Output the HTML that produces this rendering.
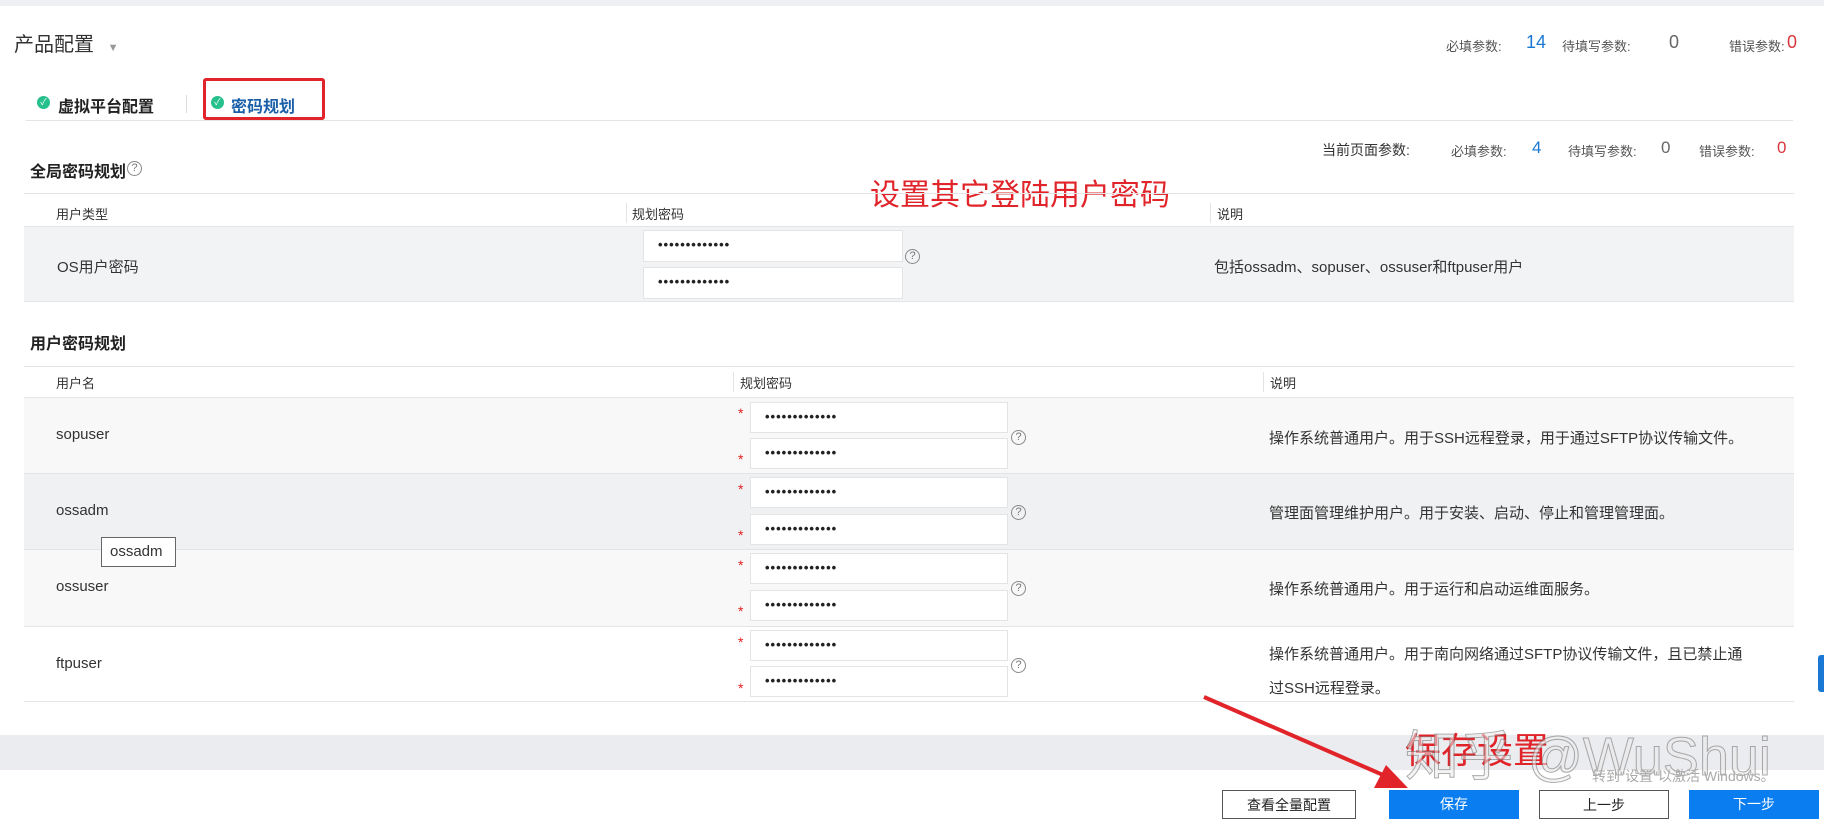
<!DOCTYPE html>
<html><head><meta charset="utf-8"><style>
*{margin:0;padding:0;box-sizing:border-box}
body{width:1824px;height:819px;position:relative;background:#fff;font-family:"Liberation Sans","Noto Sans CJK SC",sans-serif;color:#333;overflow:hidden}
.a{position:absolute;white-space:nowrap}
.inp{position:absolute;background:#fff;border:1px solid #e3e4e6;font-size:13px;letter-spacing:1px;padding-left:14px;line-height:28px;color:#222;font-weight:bold}
.q{position:absolute;width:15px;height:15px;border:1px solid #888;border-radius:50%;font-size:11px;line-height:13px;text-align:center;color:#777}
.st{color:#e02020;position:absolute;font-size:14px}
.btn{position:absolute;top:790px;height:29px;width:130px;text-align:center;line-height:29px;font-size:14px}
.line{position:absolute;height:1px;background:#e3e4e6}
</style></head><body>
<div class="a" style="left:0;top:0;width:1824px;height:6px;background:#eef0f3"></div>
<div class="a" style="left:14px;top:28px;font-size:20px;color:#333">产品配置 <span style="font-size:11px;color:#999;margin-left:8px">▼</span></div>
<div class="a" style="left:1446px;top:36px;font-size:13px;color:#555">必填参数:</div>
<div class="a" style="left:1526px;top:32px;font-size:18px;color:#1a78d4">14</div>
<div class="a" style="left:1562px;top:36px;font-size:13px;color:#555">待填写参数:</div>
<div class="a" style="left:1669px;top:32px;font-size:18px;color:#666">0</div>
<div class="a" style="left:1729px;top:36px;font-size:13px;color:#555">错误参数:</div>
<div class="a" style="left:1787px;top:32px;font-size:18px;color:#d9363e">0</div>

<div class="a" style="left:37px;top:96px;width:13px;height:13px;border-radius:50%;background:#26c08c;color:#fff;font-size:9px;line-height:13px;text-align:center">✓</div>
<div class="a" style="left:58px;top:93px;font-size:16px;font-weight:bold;color:#222">虚拟平台配置</div>
<div class="a" style="left:186px;top:95px;width:1px;height:18px;background:#ddd"></div>
<div class="a" style="left:211px;top:96px;width:13px;height:13px;border-radius:50%;background:#26c08c;color:#fff;font-size:9px;line-height:13px;text-align:center">✓</div>
<div class="a" style="left:231px;top:93px;font-size:16px;font-weight:bold;color:#1a5fa8">密码规划</div>
<div class="a" style="left:203px;top:78px;width:122px;height:42px;border:3px solid #e0242a;border-radius:3px"></div>
<div class="line" style="left:26px;top:120px;width:1767px"></div>

<div class="a" style="left:1322px;top:140px;font-size:14px;color:#333">当前页面参数:</div>
<div class="a" style="left:1451px;top:141px;font-size:13px;color:#555">必填参数:</div>
<div class="a" style="left:1532px;top:138px;font-size:17px;color:#1a78d4">4</div>
<div class="a" style="left:1568px;top:141px;font-size:13px;color:#555">待填写参数:</div>
<div class="a" style="left:1661px;top:138px;font-size:17px;color:#666">0</div>
<div class="a" style="left:1699px;top:141px;font-size:13px;color:#555">错误参数:</div>
<div class="a" style="left:1777px;top:138px;font-size:17px;color:#d9363e">0</div>

<div class="a" style="left:30px;top:158px;font-size:16px;font-weight:bold;color:#222">全局密码规划</div>
<div class="q" style="left:127px;top:161px">?</div>
<div class="a" style="left:870px;top:170px;font-size:30px;color:#e0242a">设置其它登陆用户密码</div>

<div class="line" style="left:24px;top:193px;width:1770px"></div>
<div class="a" style="left:56px;top:204px;font-size:13px">用户类型</div>
<div class="a" style="left:626px;top:203px;width:1px;height:20px;background:#e3e4e6"></div>
<div class="a" style="left:632px;top:204px;font-size:13px">规划密码</div>
<div class="a" style="left:1210px;top:203px;width:1px;height:20px;background:#e3e4e6"></div>
<div class="a" style="left:1217px;top:204px;font-size:13px">说明</div>
<div class="a" style="left:24px;top:226px;width:1770px;height:76px;background:#f2f3f5;border-top:1px solid #e3e4e6;border-bottom:1px solid #e3e4e6"></div>
<div class="a" style="left:57px;top:256px;font-size:15px">OS用户密码</div>
<div class="inp" style="left:643px;top:230px;width:260px;height:32px">•••••••••••••</div>
<div class="inp" style="left:643px;top:267px;width:260px;height:32px">•••••••••••••</div>
<div class="q" style="left:905px;top:249px">?</div>
<div class="a" style="left:1214px;top:256px;font-size:15px">包括ossadm、sopuser、ossuser和ftpuser用户</div>

<div class="a" style="left:30px;top:330px;font-size:16px;font-weight:bold;color:#222">用户密码规划</div>
<div class="line" style="left:24px;top:366px;width:1770px"></div>
<div class="a" style="left:56px;top:373px;font-size:13px">用户名</div>
<div class="a" style="left:733px;top:372px;width:1px;height:20px;background:#e3e4e6"></div>
<div class="a" style="left:740px;top:373px;font-size:13px">规划密码</div>
<div class="a" style="left:1263px;top:372px;width:1px;height:20px;background:#e3e4e6"></div>
<div class="a" style="left:1270px;top:373px;font-size:13px">说明</div>

<div class="a" style="left:24px;top:397px;width:1770px;height:76px;background:#f8f8f9;border-top:1px solid #e3e4e6"></div>
<div class="a" style="left:24px;top:473px;width:1770px;height:76px;background:#f0f1f3;border-top:1px solid #e3e4e6"></div>
<div class="a" style="left:24px;top:549px;width:1770px;height:77px;background:#f8f8f9;border-top:1px solid #e3e4e6"></div>
<div class="a" style="left:24px;top:626px;width:1770px;height:76px;background:#fff;border-top:1px solid #e3e4e6;border-bottom:1px solid #e3e4e6"></div>

<div class="a" style="left:56px;top:426px;font-size:15px">sopuser</div>
<div class="a" style="left:56px;top:502px;font-size:15px">ossadm</div>
<div class="a" style="left:56px;top:578px;font-size:15px">ossuser</div>
<div class="a" style="left:56px;top:655px;font-size:15px">ftpuser</div>
<div class="a" style="left:101px;top:537px;width:75px;height:30px;border:1px solid #666;background:#fff;font-size:15px;line-height:28px;padding-left:8px">ossadm</div>

<div class="st" style="left:738px;top:405px">*</div><div class="inp" style="left:750px;top:402px;width:258px;height:31px">•••••••••••••</div>
<div class="st" style="left:738px;top:451px">*</div><div class="inp" style="left:750px;top:438px;width:258px;height:31px">•••••••••••••</div>
<div class="q" style="left:1011px;top:430px">?</div>
<div class="st" style="left:738px;top:481px">*</div><div class="inp" style="left:750px;top:477px;width:258px;height:31px">•••••••••••••</div>
<div class="st" style="left:738px;top:527px">*</div><div class="inp" style="left:750px;top:514px;width:258px;height:31px">•••••••••••••</div>
<div class="q" style="left:1011px;top:505px">?</div>
<div class="st" style="left:738px;top:557px">*</div><div class="inp" style="left:750px;top:553px;width:258px;height:31px">•••••••••••••</div>
<div class="st" style="left:738px;top:603px">*</div><div class="inp" style="left:750px;top:590px;width:258px;height:31px">•••••••••••••</div>
<div class="q" style="left:1011px;top:581px">?</div>
<div class="st" style="left:738px;top:634px">*</div><div class="inp" style="left:750px;top:630px;width:258px;height:31px">•••••••••••••</div>
<div class="st" style="left:738px;top:680px">*</div><div class="inp" style="left:750px;top:666px;width:258px;height:31px">•••••••••••••</div>
<div class="q" style="left:1011px;top:658px">?</div>

<div class="a" style="left:1269px;top:427px;font-size:15px">操作系统普通用户。用于SSH远程登录，用于通过SFTP协议传输文件。</div>
<div class="a" style="left:1269px;top:502px;font-size:15px">管理面管理维护用户。用于安装、启动、停止和管理管理面。</div>
<div class="a" style="left:1269px;top:578px;font-size:15px">操作系统普通用户。用于运行和启动运维面服务。</div>
<div class="a" style="left:1269px;top:638px;font-size:15px;line-height:34px">操作系统普通用户。用于南向网络通过SFTP协议传输文件，且已禁止通<br>过SSH远程登录。</div>
<div class="a" style="left:1818px;top:655px;width:6px;height:37px;background:#1a78d4;border-radius:3px 0 0 3px"></div>

<div class="a" style="left:0;top:735px;width:1824px;height:35px;background:#ebecef"></div>
<div class="a" style="left:1405px;top:722px;font-size:36px;color:#e0242a">保存设置</div>
<div class="a" style="left:1405px;top:712px;font-size:54px;color:rgba(235,235,235,.55);-webkit-text-stroke:1px rgba(110,110,110,.55)">知乎 @WuShui</div>
<div class="a" style="left:1592px;top:766px;font-size:14px;color:#aaa">转到"设置"以激活 Windows。</div>
<svg class="a" style="left:0;top:0" width="1824" height="819"><line x1="1204" y1="697" x2="1390" y2="778" stroke="#e0242a" stroke-width="4"/><polygon points="1408,788 1374,788 1386,765" fill="#e0242a"/></svg>

<div class="btn" style="left:1222px;width:134px;border:1px solid #555;color:#222">查看全量配置</div>
<div class="btn" style="left:1389px;background:#0a7ef0;color:#fff">保存</div>
<div class="btn" style="left:1539px;border:1px solid #555;color:#222">上一步</div>
<div class="btn" style="left:1689px;background:#0a7ef0;color:#fff">下一步</div>
</body></html>
